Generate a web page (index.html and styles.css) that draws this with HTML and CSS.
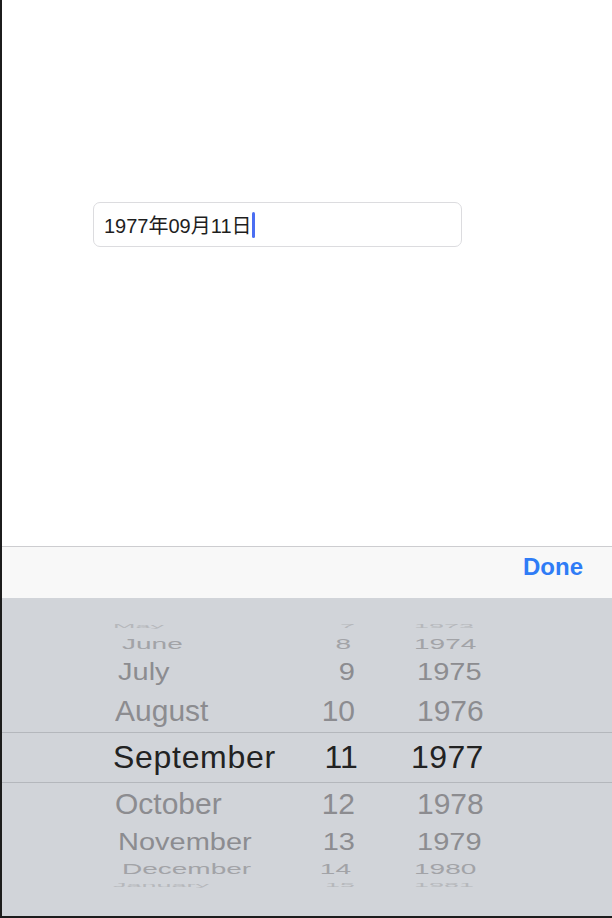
FILE: index.html
```html
<!DOCTYPE html>
<html lang="zh">
<head>
    <meta charset="UTF-8">
    <meta name="viewport" content="width=device-width, initial-scale=1.0">
    <title>Date Picker</title>
    <link rel="stylesheet" href="styles.css">
</head>
<body>

    <div class="screen">
        <div class="content">
            <div class="date-field">
                <span class="date-text">1977年09月11日</span><span class="caret"></span>
            </div>
        </div>

        <div class="toolbar">
            <button class="done-btn">Done</button>
        </div>

        <div class="picker">
            <div class="wheel">
                <div class="wheel-row r-m4"><span class="month">May</span><span class="day">7</span><span class="year">1973</span></div>
                <div class="wheel-row r-m3"><span class="month">June</span><span class="day">8</span><span class="year">1974</span></div>
                <div class="wheel-row r-m2"><span class="month">July</span><span class="day">9</span><span class="year">1975</span></div>
                <div class="wheel-row r-m1"><span class="month">August</span><span class="day">10</span><span class="year">1976</span></div>
                <div class="wheel-row r-0"><span class="month">September</span><span class="day">11</span><span class="year">1977</span></div>
                <div class="wheel-row r-p1"><span class="month">October</span><span class="day">12</span><span class="year">1978</span></div>
                <div class="wheel-row r-p2"><span class="month">November</span><span class="day">13</span><span class="year">1979</span></div>
                <div class="wheel-row r-p3"><span class="month">December</span><span class="day">14</span><span class="year">1980</span></div>
                <div class="wheel-row r-p4"><span class="month">January</span><span class="day">15</span><span class="year">1981</span></div>
            </div>
        </div>
    </div>

</body>
</html>
```

FILE: styles.css
```css
html, body {
    margin: 0;
    padding: 0;
    background-color: #1c1c1c;
}
body {
    font-family: 'Liberation Sans', Arial, 'Noto Sans CJK SC', sans-serif;
}
.screen {
    width: 610px;
    height: 916px;
    margin-left: 2px;
    background-color: #ffffff;
    display: flex;
    flex-direction: column;
}
.content {
    flex: 1;
    padding: 202px 0 0 91px;
}
.date-field {
    width: 357px;
    height: 43px;
    padding-left: 10px;
    border: 1px solid #dcdcdf;
    border-radius: 7px;
    display: flex;
    align-items: center;
}
.date-text {
    font-family: 'Liberation Sans', Arial, 'Noto Sans CJK SC', sans-serif;
    font-size: 20px;
    color: #1e1e1e;
}
.caret {
    width: 3px;
    height: 26px;
    background-color: #4b6ef2;
    border-radius: 1.5px;
}
.toolbar {
    height: 51px;
    border-top: 1px solid #cdcdd0;
    background-color: #f8f8f8;
    display: flex;
    align-items: center;
    justify-content: flex-end;
    padding-right: 29px;
}
.done-btn {
    font-family: 'Liberation Sans', Arial, sans-serif;
    font-size: 24px;
    font-weight: bold;
    color: #2f7cf6;
    background: none;
    border: none;
    padding: 0;
    margin-bottom: 12px;
}
.picker {
    height: 296px;
    padding-top: 22px;
    background-color: #d1d4d9;
}
.wheel {
    display: flex;
    flex-direction: column;
}
.wheel-row {
    display: flex;
    align-items: center;
    overflow: hidden;
    color: #8c8c90;
    font-size: 30px;
}
.wheel-row span {
    display: block;
    white-space: nowrap;
    box-sizing: border-box;
}
.month {
    width: 200px;
    margin-left: 111px;
}
.day {
    width: 42px;
    text-align: right;
}
.year {
    margin-left: 59px;
}
.r-m4 { height: 13px; }
.r-m3 { height: 21px; }
.r-m2 { height: 36px; }
.r-m1 { height: 42px; }
.r-0 {
    height: 49px;
    border-top: 1px solid #b4b7bc;
    border-bottom: 1px solid #b4b7bc;
    color: #222222;
    font-size: 32px;
    letter-spacing: 0.7px;
}
.r-0 .day {
    width: 45px;
    letter-spacing: 0.2px;
}
.r-0 .year {
    margin-left: 53px;
    letter-spacing: 0.4px;
}
.r-p1 { height: 42px; }
.r-p2 { height: 34px; }
.r-p3 { height: 20px; }
.r-p4 { height: 12px; }

.r-m4 span, .r-p4 span {
    transform: scaleY(0.2);
    color: #b6b8bc;
    font-size: 27px;
}
.r-m3 span, .r-p3 span {
    transform: scaleY(0.52);
    color: #a2a3a7;
    font-size: 28px;
}
.r-m2 span, .r-p2 span {
    transform: scaleY(0.84);
    font-size: 29px;
}
.r-m1 span, .r-p1 span {
    transform: scaleY(0.98);
}
.r-m3 .month, .r-p3 .month { padding-left: 9px; }
.r-m2 .month, .r-p2 .month { padding-left: 5px; }
.r-m1 .month, .r-p1 .month { padding-left: 2px; }
.r-m3 .day, .r-p3 .day { padding-right: 4px; }
.r-m1 .year, .r-p1 .year, .r-m2 .year, .r-p2 .year { padding-left: 3px; }
```
